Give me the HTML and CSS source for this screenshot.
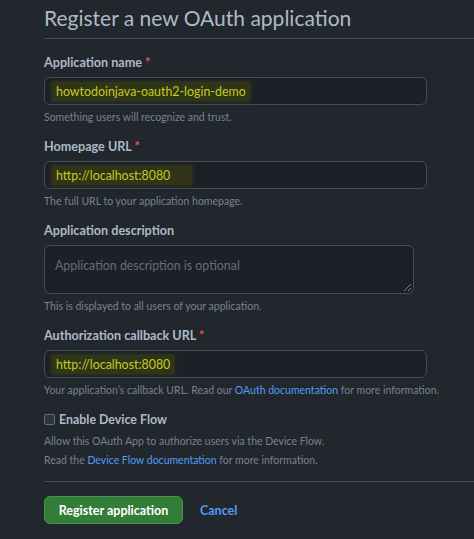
FILE: index.html
```html
<!DOCTYPE html>
<html lang="en">
<head>
<meta charset="utf-8">
<title>Register a new OAuth application</title>
<link rel="stylesheet" href="styles.css">
</head>
<body>
<div class="page">
  <h1 class="title">Register a new OAuth application</h1>
  <form class="form">
    <div class="group">
      <label class="label">Application name <span class="req">*</span></label>
      <div class="input"><span class="hl">howtodoinjava-oauth2-login-demo</span></div>
      <p class="note">Something users will recognize and trust.</p>
    </div>
    <div class="group">
      <label class="label">Homepage URL <span class="req">*</span></label>
      <div class="input"><span class="hl hl-tail">http://localhost:8080</span></div>
      <p class="note">The full URL to your application homepage.</p>
    </div>
    <div class="group">
      <label class="label">Application description</label>
      <div class="textarea"><span class="placeholder">Application description is optional</span><span class="grip"></span></div>
      <p class="note">This is displayed to all users of your application.</p>
    </div>
    <div class="group">
      <label class="label">Authorization callback URL <span class="req">*</span></label>
      <div class="input"><span class="hl">http://localhost:8080</span></div>
      <p class="note">Your application’s callback URL. Read our <a class="link">OAuth documentation</a> for more information.</p>
    </div>
    <div class="check-row">
      <span class="checkbox"></span>
      <span class="check-label">Enable Device Flow</span>
    </div>
    <p class="note note-first">Allow this OAuth App to authorize users via the Device Flow.</p>
    <p class="note note-second">Read the <a class="link">Device Flow documentation</a> for more information.</p>
    <div class="actions">
      <button type="button" class="btn">Register application</button>
      <a class="cancel">Cancel</a>
    </div>
  </form>
</div>
</body>
</html>
```
FILE: styles.css
```css
html, body {
  margin: 0;
  padding: 0;
  background: #22272e;
}
body {
  font-family: Lato, "Noto Sans", sans-serif;
  color: #adbac7;
}
.page {
  padding-left: 44px;
}
.title {
  margin: 0;
  height: 39px;
  box-sizing: border-box;
  border-bottom: 1px solid #444c56;
  font-size: 21px;
  font-weight: 400;
  line-height: 36px;
  color: #adbac7;
  white-space: nowrap;
}
.form {
  padding-top: 14px;
}
.group {
  margin-bottom: 12px;
}
.label {
  display: block;
  height: 18px;
  line-height: 20px;
  font-size: 12.6px;
  font-weight: 700;
  color: #adbac7;
}
.req {
  color: #e5534b;
}
.input {
  margin-top: 6px;
  width: 383px;
  height: 28px;
  box-sizing: border-box;
  border: 1px solid #444c56;
  border-radius: 6px;
  background: #1c2128;
  display: flex;
  align-items: center;
  padding-left: 7px;
}
.hl {
  font-size: 12.4px;
  color: #c2cc1e;
  background: #30351a;
  padding: 2px 4px;
  line-height: 15px;
  box-shadow: 0 0 3px 1px #30351a;
}
.hl-tail {
  padding-right: 22px;
}
.textarea {
  position: relative;
  margin-top: 6px;
  width: 370px;
  height: 49px;
  box-sizing: border-box;
  border: 1px solid #444c56;
  border-radius: 6px;
  background: #1c2128;
  padding: 8px 10px;
}
.placeholder {
  font-size: 12.4px;
  line-height: 17px;
  color: #636e7b;
}
.grip {
  position: absolute;
  right: 2px;
  bottom: 2px;
  width: 7px;
  height: 7px;
  background: linear-gradient(135deg, transparent 45%, #768390 45%, #768390 55%, transparent 55%, transparent 75%, #768390 75%, #768390 85%, transparent 85%);
}
.note {
  margin: 4px 0 0;
  height: 16px;
  line-height: 16px;
  font-size: 10.5px;
  color: #768390;
  white-space: nowrap;
}
.link {
  color: #539bf5;
  text-decoration: none;
}
.check-row {
  display: flex;
  align-items: center;
  height: 18px;
  gap: 4px;
}
.checkbox {
  width: 11px;
  height: 11px;
  box-sizing: border-box;
  border: 1px solid #636e7b;
  border-radius: 2px;
  background: #2d333b;
}
.check-label {
  font-size: 12.4px;
  font-weight: 700;
  color: #adbac7;
}
.note-first {
  margin-top: 5px;
}
.note-second {
  margin-top: 3px;
}
.actions {
  margin-top: 13px;
  border-top: 1px solid #444c56;
  padding-top: 14px;
  display: flex;
  align-items: center;
  gap: 17px;
}
.btn {
  width: 139px;
  height: 28px;
  border: 1px solid #46954a;
  border-radius: 6px;
  background: #347d39;
  color: #ffffff;
  font-family: inherit;
  font-size: 12.5px;
  font-weight: 700;
  padding: 0;
}
.cancel {
  color: #539bf5;
  font-size: 12.5px;
  font-weight: 700;
}
```
